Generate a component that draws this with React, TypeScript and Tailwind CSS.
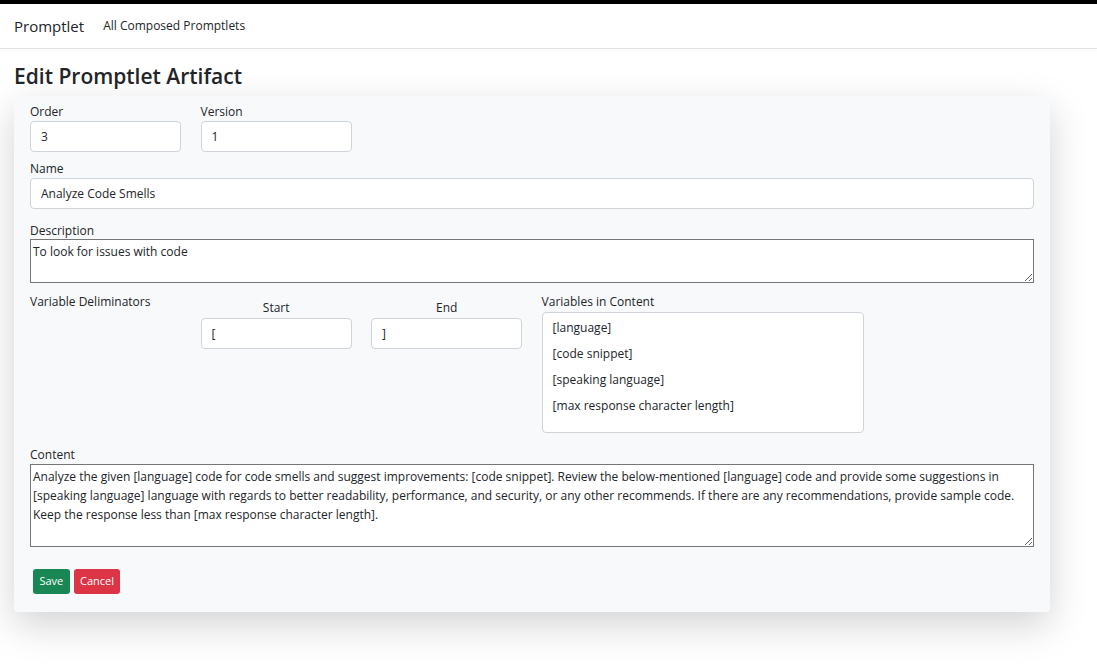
import React from "react";

const content =
  "Analyze the given [language] code for code smells and suggest improvements: [code snippet]. Review the below-mentioned [language] code and provide some suggestions in [speaking language] language with regards to better readability, performance, and security, or any other recommends. If there are any recommendations, provide sample code. Keep the response less than [max response character length].";

const variables = ["[language]", "[code snippet]", "[speaking language]", "[max response character length]"];

const inputCls =
  "block h-[31px] w-full rounded-[4px] border border-[#ced4da] bg-white px-[10px] text-[12px] leading-[19.2px] text-[#212529] outline-none";
const textareaCls =
  "block w-full border border-[#767676] bg-white p-[2px] text-[12px] leading-[19.2px] text-[#212529] outline-none";

function Label({ children, className = "" }: { children: React.ReactNode; className?: string }) {
  return <label className={`block text-[12px] leading-[19.2px] ${className}`}>{children}</label>;
}

export default function App() {
  return (
    <div
      className="min-h-[667px] bg-white text-[#212529]"
      style={{ fontFamily: '"Open Sans", "Noto Sans", sans-serif' }}
    >
      <div className="h-[4px] bg-black" />
      <nav className="flex h-[45px] items-center border-b border-[#dee2e6] px-[14px] shadow-[0_1px_4px_rgba(0,0,0,0.04)]">
        <span className="text-[15px] text-[#212529]">Promptlet</span>
        <a className="ml-[19px] text-[12px] text-[#212529]">All Composed Promptlets</a>
      </nav>

      <main className="px-[14px]">
        <h3 className="pt-[14px] pb-[7px] text-[21px] font-semibold leading-[26px]">Edit Promptlet Artifact</h3>

        <form className="w-[1036px] rounded-[4px] bg-[#f8f9fa] px-[16px] pt-[6px] pb-[18px] shadow-[0_13px_38px_rgba(0,0,0,0.175)]">
          <div className="grid grid-cols-12 gap-x-[19.2px]">
            <div className="col-span-2">
              <Label>Order</Label>
              <input className={inputCls} defaultValue="3" readOnly />
            </div>
            <div className="col-span-2">
              <Label>Version</Label>
              <input className={inputCls} defaultValue="1" readOnly />
            </div>
          </div>

          <div className="mt-[7px]">
            <Label>Name</Label>
            <input className={inputCls} defaultValue="Analyze Code Smells" readOnly />
          </div>

          <div className="mt-[12px]">
            <Label>Description</Label>
            <textarea
              className={`${textareaCls} -mt-[1.5px]`}
              rows={2}
              defaultValue="To look for issues with code"
              readOnly
            />
          </div>

          <div className="mt-[9px] grid grid-cols-12 gap-x-[19.2px]">
            <div className="col-span-2">
              <Label>Variable Deliminators</Label>
            </div>
            <div className="col-span-2 pt-[6px]">
              <Label className="text-center">Start</Label>
              <input className={inputCls} defaultValue="[" readOnly />
            </div>
            <div className="col-span-2 pt-[6px]">
              <Label className="text-center">End</Label>
              <input className={inputCls} defaultValue="]" readOnly />
            </div>
            <div className="col-span-4">
              <Label>Variables in Content</Label>
              <div className="h-[121px] w-[322px] rounded-[4px] border border-[#ced4da] bg-white px-[10px] pt-[5px]">
                {variables.map((v) => (
                  <p key={v} className="mb-[7px] text-[12px] leading-[19.2px]">
                    {v}
                  </p>
                ))}
              </div>
            </div>
          </div>

          <div className="mt-[12px]">
            <Label>Content</Label>
            <textarea className={textareaCls} rows={4} defaultValue={content} readOnly />
          </div>

          <div className="mt-[22px] flex gap-[4px] pl-[3px]">
            <button
              type="button"
              className="h-[25px] rounded-[3px] bg-[#198754] px-[6.4px] text-[11px] text-white"
            >
              Save
            </button>
            <button
              type="button"
              className="h-[25px] rounded-[3px] bg-[#dc3545] px-[6.4px] text-[11px] text-white"
            >
              Cancel
            </button>
          </div>
        </form>
      </main>
    </div>
  );
}
